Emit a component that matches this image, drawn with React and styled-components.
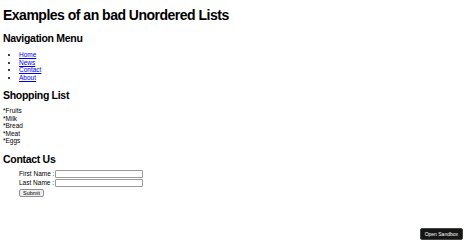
import React from 'react'
import styled, { createGlobalStyle } from 'styled-components'

const GlobalStyle = createGlobalStyle`
  html, body {
    margin: 0;
    padding: 0;
    background: #fff;
  }
  body {
    font-family: "Liberation Sans", Arial, sans-serif;
    font-size: 6.5px;
    line-height: 7.5px;
    color: #000;
  }
`;

const Page = styled.div`
  padding: 0 3px;
`;

const Title = styled.h1`
  font-size: 14px;
  line-height: 16px;
  letter-spacing: -0.5px;
  font-weight: bold;
  margin: 7px 0 0;
`;

const SectionTitle = styled.h2`
  font-size: 10.5px;
  line-height: 12px;
  letter-spacing: -0.3px;
  font-weight: bold;
  margin: ${p => p.$top || 8}px 0 ${p => p.$bottom || 6}px;
`;

const NavList = styled.ul`
  margin: 0;
  padding-left: 16px;
  list-style: disc;
`;

const NavItem = styled.li`
  line-height: 7.5px;
`;

const NavLink = styled.a`
  color: #0000ee;
  text-decoration: underline;
`;

const Shopping = styled.div`
  line-height: 7.5px;
`;

const Form = styled.form`
  padding-left: 16px;
  display: flex;
  flex-direction: column;
  gap: 1px;
`;

const Row = styled.label`
  display: flex;
  align-items: center;
  gap: 1px;
  height: 8px;
`;

const Input = styled.input`
  width: 86px;
  height: 6px;
  padding: 0;
  border: 1px solid #9a9a9a;
  border-radius: 1px;
  font-size: 6px;
`;

const Submit = styled.button`
  margin-top: 1px;
  align-self: flex-start;
  font-family: inherit;
  font-size: 5.5px;
  line-height: 6px;
  padding: 0 3px;
  height: 8px;
  border: 1px solid #8f8f8f;
  border-radius: 2px;
  background: #efefef;
  color: #000;
`;

const SandboxButton = styled.a`
  position: fixed;
  right: 11px;
  bottom: 8px;
  background: #151515;
  color: #fff;
  font-size: 5px;
  line-height: 6px;
  padding: 2px 4px;
  border-radius: 2px;
  border: 1px solid #444;
  text-decoration: none;
`;

const navItems = ['Home', 'News', 'Contact', 'About'];
const groceries = ['Fruits', 'Milk', 'Bread', 'Meat', 'Eggs'];

const App = () => (
  <>
    <GlobalStyle />
    <Page>
      <Title>Examples of an bad Unordered Lists</Title>
      <SectionTitle $top={9} $bottom={7}>Navigation Menu</SectionTitle>
      <NavList>
        {navItems.map(item => (
          <NavItem key={item}>
            <NavLink href="#">{item}</NavLink>
          </NavItem>
        ))}
      </NavList>
      <SectionTitle>Shopping List</SectionTitle>
      <Shopping>
        {groceries.map(item => (
          <div key={item}>*{item}</div>
        ))}
      </Shopping>
      <SectionTitle $bottom={5}>Contact Us</SectionTitle>
      <Form onSubmit={e => e.preventDefault()}>
        <Row>First Name : <Input type="text" /></Row>
        <Row>Last Name : <Input type="text" /></Row>
        <Submit type="submit">Submit</Submit>
      </Form>
    </Page>
    <SandboxButton href="#">Open Sandbox</SandboxButton>
  </>
);

export default App;
